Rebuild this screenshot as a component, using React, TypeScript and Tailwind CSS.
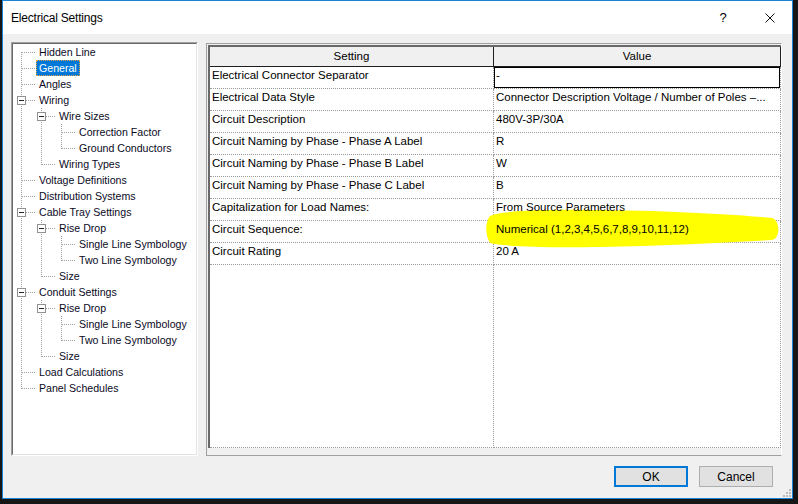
import React from 'react';

type Node = { label: string; children?: Node[]; selected?: boolean };
type Flat = {
  label: string;
  level: number;
  anc: boolean[];
  isLast: boolean;
  isFirstRoot: boolean;
  hasChildren: boolean;
  selected?: boolean;
};

const symbology: Node[] = [
  { label: 'Rise Drop', children: [{ label: 'Single Line Symbology' }, { label: 'Two Line Symbology' }] },
  { label: 'Size' },
];

const tree: Node[] = [
  { label: 'Hidden Line' },
  { label: 'General', selected: true },
  { label: 'Angles' },
  {
    label: 'Wiring',
    children: [
      { label: 'Wire Sizes', children: [{ label: 'Correction Factor' }, { label: 'Ground Conductors' }] },
      { label: 'Wiring Types' },
    ],
  },
  { label: 'Voltage Definitions' },
  { label: 'Distribution Systems' },
  { label: 'Cable Tray Settings', children: symbology },
  { label: 'Conduit Settings', children: symbology },
  { label: 'Load Calculations' },
  { label: 'Panel Schedules' },
];

function flatten(nodes: Node[], level: number, anc: boolean[], out: Flat[]) {
  nodes.forEach((n, i) => {
    const isLast = i === nodes.length - 1;
    out.push({
      label: n.label,
      level,
      anc,
      isLast,
      isFirstRoot: level === 0 && i === 0,
      hasChildren: !!n.children,
      selected: n.selected,
    });
    if (n.children) flatten(n.children, level + 1, [...anc, !isLast], out);
  });
}

const flat: Flat[] = [];
flatten(tree, 0, [], flat);

const DOT = '#a0a0a0';

function TreeRow({ item }: { item: Flat }) {
  return (
    <div className="flex h-4">
      {item.anc.map((cont, i) => (
        <svg key={i} width={20} height={16} className="shrink-0" shapeRendering="crispEdges">
          {cont && <line x1={8.5} y1={0} x2={8.5} y2={16} stroke={DOT} strokeDasharray="1 1" />}
        </svg>
      ))}
      <svg width={23} height={16} className="shrink-0" shapeRendering="crispEdges">
        <line
          x1={8.5}
          y1={item.isFirstRoot ? 8 : 0}
          x2={8.5}
          y2={item.isLast ? 9 : 16}
          stroke={DOT}
          strokeDasharray="1 1"
        />
        <line x1={9} y1={8.5} x2={23} y2={8.5} stroke={DOT} strokeDasharray="1 1" />
        {item.hasChildren && (
          <>
            <rect x={4.5} y={4.5} width={8} height={8} fill="#ffffff" stroke="#919191" />
            <line x1={6} y1={8.5} x2={11} y2={8.5} stroke="#222222" />
          </>
        )}
      </svg>
      <span
        className={
          item.selected
            ? 'px-[3px] h-4 leading-4 whitespace-nowrap bg-[#0078d7] text-white outline outline-1 outline-dotted outline-[#e8a33c] -outline-offset-1'
            : 'px-[3px] h-4 leading-4 whitespace-nowrap text-[#0a0a1e]'
        }
      >
        {item.label}
      </span>
    </div>
  );
}

const rows: [string, string][] = [
  ['Electrical Connector Separator', '-'],
  ['Electrical Data Style', 'Connector Description Voltage / Number of Poles –...'],
  ['Circuit Description', '480V-3P/30A'],
  ['Circuit Naming by Phase - Phase A Label', 'R'],
  ['Circuit Naming by Phase - Phase B Label', 'W'],
  ['Circuit Naming by Phase - Phase C Label', 'B'],
  ['Capitalization for Load Names:', 'From Source Parameters'],
  ['Circuit Sequence:', 'Numerical (1,2,3,4,5,6,7,8,9,10,11,12)'],
  ['Circuit Rating', '20 A'],
];

export default function App() {
  return (
    <div className="w-[798px] h-[504px] bg-[#161616] pl-[2px] font-['Liberation_Sans',Arial,sans-serif] text-black">
      <div className="relative w-[791px] h-[499px] border border-[#1883d7] bg-[#f0f0f0] flex flex-col">
        {/* Title bar */}
        <div className="h-[33px] bg-white flex items-center pl-[8px] pr-[17px] text-[12px]">
          <span className="flex-1 tracking-[-0.2px]">Electrical Settings</span>
          <span className="w-[12px] text-center text-[13px]">?</span>
          <svg width={10} height={10} className="ml-[36px]" viewBox="0 0 10 10">
            <path d="M0.5 0.5 L9.5 9.5 M9.5 0.5 L0.5 9.5" stroke="#111" strokeWidth={1} fill="none" />
          </svg>
        </div>

        {/* Body */}
        <div className="flex pl-[8px] pt-[8px] gap-[8px]">
          {/* Tree */}
          <div className="w-[187px] h-[414px] border border-t-[#a0a0a0] border-l-[#a0a0a0] border-r-white border-b-white">
            <div className="h-full border border-t-[#696969] border-l-[#696969] border-r-[#e3e3e3] border-b-[#e3e3e3] bg-white overflow-hidden text-[10.6px]">
              {flat.map((it, i) => (
                <TreeRow key={i} item={it} />
              ))}
            </div>
          </div>

          {/* Grid frame */}
          <div className="relative mt-px w-[576px] h-[413px] border border-[#a0a0a0] border-r-white pt-px pl-px pb-[7px] text-[11.5px]">
            <svg className="absolute left-0 top-0" width={575} height={412}>
              <path
                d="M283,172 C293,167 333,165 393,166 C473,167 533,171 565,174 C573,176 574,194 565,196 C513,199 453,202 393,203 C333,204 293,202 283,199 C278,191 278,178 283,172 Z"
                fill="#ffff00"
              />
            </svg>
            <div className="w-[573px] h-[403px] border-t-2 border-l-2 border-[#696969] bg-white flex flex-col">
              {/* Header */}
              <div className="flex h-[20px] shrink-0 bg-[#f0f0f0] border-b border-[#1e1e1e]">
                <div className="w-[284px] border-r border-[#1e1e1e] flex items-center justify-center">
                  <span className="relative">Setting</span>
                </div>
                <div className="w-[287px] border-r border-[#1e1e1e] flex items-center justify-center">
                  <span className="relative">Value</span>
                </div>
              </div>
              {rows.map(([s, v], i) => (
                <div key={i} className="flex h-[22px] shrink-0">
                  <div className="w-[284px] border-r border-b border-dotted border-[#9a9a9a] flex items-center pl-[2px] pb-[4px] overflow-hidden whitespace-nowrap">
                    <span className="relative">{s}</span>
                  </div>
                  <div
                    className={
                      i === 0
                        ? 'relative w-[287px] border-r border-b border-dotted border-[#9a9a9a] flex items-center pl-[2px] pb-[4px] overflow-hidden whitespace-nowrap'
                        : 'w-[287px] border-r border-b border-dotted border-[#9a9a9a] flex items-center pl-[2px] pb-[4px] overflow-hidden whitespace-nowrap'
                    }
                  >
                    <span className="relative">{v}</span>
                    {i === 0 && (
                      <span className="absolute -left-px -top-px -right-px -bottom-px border-2 border-black" />
                    )}
                  </div>
                </div>
              ))}
              {/* Filler */}
              <div className="flex flex-1">
                <div className="w-[284px] border-r border-b border-dotted border-[#9a9a9a]" />
                <div className="w-[287px] border-r border-b border-dotted border-[#9a9a9a]" />
              </div>
            </div>
          </div>
        </div>

        {/* Footer */}
        <div className="flex justify-end gap-[11px] pr-[19px] mt-[10px] text-[12px]">
          <button className="w-[74px] h-[21px] border-2 border-[#0078d7] bg-[#e1e1e1] flex items-center justify-center">
            OK
          </button>
          <button className="w-[74px] h-[21px] border border-[#adadad] bg-[#e1e1e1] flex items-center justify-center">
            Cancel
          </button>
        </div>

        {/* Resize grip */}
        <svg className="absolute right-px bottom-px" width={9} height={9} shapeRendering="crispEdges">
          <rect x={7} y={1} width={2} height={2} fill="#bcbcbc" />
          <rect x={4} y={4} width={2} height={2} fill="#bcbcbc" />
          <rect x={7} y={4} width={2} height={2} fill="#bcbcbc" />
          <rect x={1} y={7} width={2} height={2} fill="#bcbcbc" />
          <rect x={4} y={7} width={2} height={2} fill="#bcbcbc" />
          <rect x={7} y={7} width={2} height={2} fill="#bcbcbc" />
        </svg>
      </div>
    </div>
  );
}
